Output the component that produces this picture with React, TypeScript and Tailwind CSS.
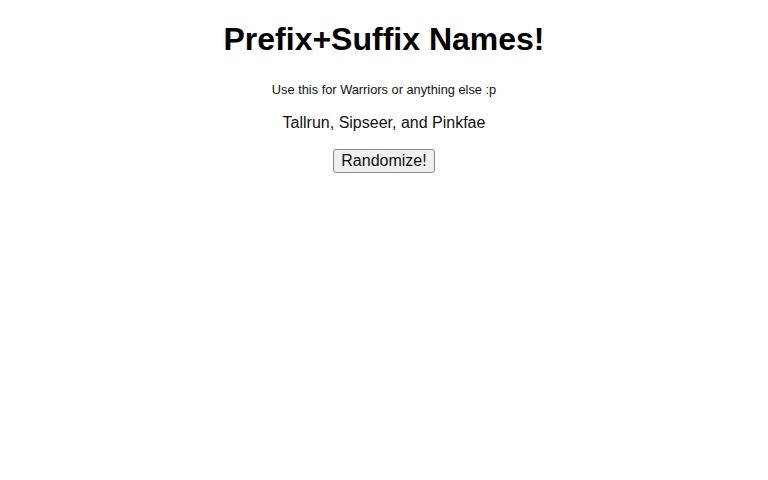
import { useState } from "react";

const prefixes = ["Tall", "Sip", "Pink", "Bramble", "Frost", "Moss", "Hollow", "Dawn"];
const suffixes = ["run", "seer", "fae", "claw", "pelt", "whisker", "leap", "song"];

function pick(list: string[]) {
  return list[Math.floor(Math.random() * list.length)];
}

function makeName() {
  return pick(prefixes) + pick(suffixes);
}

export default function App() {
  const [names, setNames] = useState<string[]>(["Tallrun", "Sipseer", "Pinkfae"]);

  const randomize = () => {
    setNames([makeName(), makeName(), makeName()]);
  };

  return (
    <div className="min-h-[480px] bg-white text-[#111] text-center font-['Liberation_Sans',Arial,sans-serif]">
      <h1 className="pt-[21px] mb-[24px] text-[32px] leading-[37px] font-bold text-black">Prefix+Suffix Names!</h1>
      <p className="text-[12.8px] leading-[15px] mb-[17px]">Use this for Warriors or anything else :p</p>
      <p className="text-[16px] leading-[18px] mb-[17px]">
        {names[0]}, {names[1]}, and {names[2]}
      </p>
      <button
        onClick={randomize}
        className="h-[24px] px-[7px] text-[16px] leading-[18px] bg-[#efefef] border border-[#8a8a8a] rounded-[3px] hover:bg-[#e5e5e5]"
      >
        Randomize!
      </button>
    </div>
  );
}
